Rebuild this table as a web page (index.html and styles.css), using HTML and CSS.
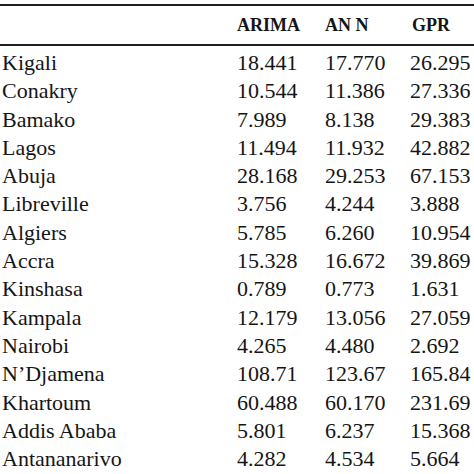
FILE: index.html
```html
<!DOCTYPE html>
<html>
<head>
<meta charset="utf-8">
<link rel="stylesheet" href="styles.css">
</head>
<body>
<div class="data-table">
  <div class="rule rule-top"></div>
  <div class="trow thead">
    <div class="cell name"></div>
    <div class="cell">ARIMA</div>
    <div class="cell">AN N</div>
    <div class="cell gpr">GPR</div>
  </div>
  <div class="rule rule-mid"></div>
  <div class="tbody-rows">
    <div class="trow"><div class="cell name">Kigali</div><div class="cell">18.441</div><div class="cell">17.770</div><div class="cell">26.295</div></div>
    <div class="trow"><div class="cell name">Conakry</div><div class="cell">10.544</div><div class="cell">11.386</div><div class="cell">27.336</div></div>
    <div class="trow"><div class="cell name">Bamako</div><div class="cell">7.989</div><div class="cell">8.138</div><div class="cell">29.383</div></div>
    <div class="trow"><div class="cell name">Lagos</div><div class="cell">11.494</div><div class="cell">11.932</div><div class="cell">42.882</div></div>
    <div class="trow"><div class="cell name">Abuja</div><div class="cell">28.168</div><div class="cell">29.253</div><div class="cell">67.153</div></div>
    <div class="trow"><div class="cell name">Libreville</div><div class="cell">3.756</div><div class="cell">4.244</div><div class="cell">3.888</div></div>
    <div class="trow"><div class="cell name">Algiers</div><div class="cell">5.785</div><div class="cell">6.260</div><div class="cell">10.954</div></div>
    <div class="trow"><div class="cell name">Accra</div><div class="cell">15.328</div><div class="cell">16.672</div><div class="cell">39.869</div></div>
    <div class="trow"><div class="cell name">Kinshasa</div><div class="cell">0.789</div><div class="cell">0.773</div><div class="cell">1.631</div></div>
    <div class="trow"><div class="cell name">Kampala</div><div class="cell">12.179</div><div class="cell">13.056</div><div class="cell">27.059</div></div>
    <div class="trow"><div class="cell name">Nairobi</div><div class="cell">4.265</div><div class="cell">4.480</div><div class="cell">2.692</div></div>
    <div class="trow"><div class="cell name">N’Djamena</div><div class="cell">108.71</div><div class="cell">123.67</div><div class="cell">165.84</div></div>
    <div class="trow"><div class="cell name">Khartoum</div><div class="cell">60.488</div><div class="cell">60.170</div><div class="cell">231.69</div></div>
    <div class="trow"><div class="cell name">Addis Ababa</div><div class="cell">5.801</div><div class="cell">6.237</div><div class="cell">15.368</div></div>
    <div class="trow"><div class="cell name">Antananarivo</div><div class="cell">4.282</div><div class="cell">4.534</div><div class="cell">5.664</div></div>
  </div>
</div>
</body>
</html>
```
FILE: styles.css
```css
html, body {
  margin: 0;
  padding: 0;
  background: #ffffff;
}
.data-table {
  width: 474px;
  height: 474px;
  overflow: hidden;
  color: #151515;
  font-family: "Times New Roman", Times, "Liberation Serif", serif;
}
.rule {
  background: #1e1e1e;
  height: 2px;
}
.rule-top {
  margin-top: 4px;
}
.trow {
  display: grid;
  grid-template-columns: 237px 88px 85px 64px;
  font-size: 22px;
  line-height: 28.3px;
  white-space: nowrap;
}
.cell {
  font-family: "Times New Roman", Times, "Liberation Serif", serif;
  font-weight: 400;
}
.cell.name {
  padding-left: 2px;
}
.thead {
  height: 38px;
  align-items: center;
  font-size: 18px;
}
.thead .cell {
  font-weight: 700;
}
.thead .gpr {
  padding-left: 2px;
}
.tbody-rows {
  padding-top: 3px;
}
```
